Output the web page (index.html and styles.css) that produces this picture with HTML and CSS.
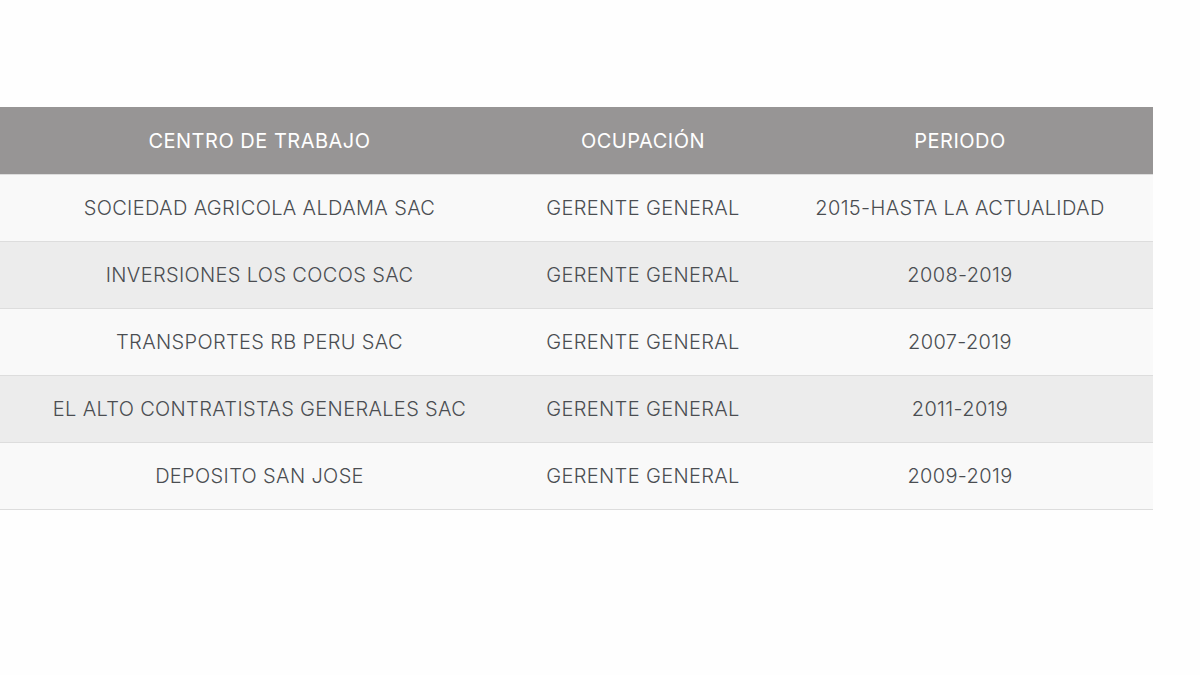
FILE: index.html
```html
<!DOCTYPE html>
<html lang="es">
<head>
<meta charset="utf-8">
<title>Experiencia</title>
<link rel="stylesheet" href="styles.css">
</head>
<body>
<main class="page">
  <table class="work-table">
    <thead>
      <tr>
        <th class="col-center">CENTRO DE TRABAJO</th>
        <th class="col-job">OCUPACIÓN</th>
        <th class="col-period">PERIODO</th>
      </tr>
    </thead>
    <tbody>
      <tr><td>SOCIEDAD AGRICOLA ALDAMA SAC</td><td>GERENTE GENERAL</td><td>2015-HASTA LA ACTUALIDAD</td></tr>
      <tr><td>INVERSIONES LOS COCOS SAC</td><td>GERENTE GENERAL</td><td>2008-2019</td></tr>
      <tr><td>TRANSPORTES RB PERU SAC</td><td>GERENTE GENERAL</td><td>2007-2019</td></tr>
      <tr><td>EL ALTO CONTRATISTAS GENERALES SAC</td><td>GERENTE GENERAL</td><td>2011-2019</td></tr>
      <tr><td>DEPOSITO SAN JOSE</td><td>GERENTE GENERAL</td><td>2009-2019</td></tr>
    </tbody>
  </table>
</main>
</body>
</html>
```
FILE: styles.css
```css
html, body {
  margin: 0;
  padding: 0;
  background: #fefefe;
}
.page {
  padding-top: 107px;
  width: 1153px;
}
.work-table {
  width: 100%;
  border-collapse: collapse;
  table-layout: fixed;
  font-family: Inter, "Liberation Sans", sans-serif;
  font-weight: 300;
  font-size: 20px;
  letter-spacing: 0.35px;
}
.col-center { width: 519px; }
.col-job { width: 248px; }
.col-period { width: 386px; }
.work-table th {
  background: #979595;
  color: #ffffff;
  font-weight: 400;
  letter-spacing: 0.5px;
  height: 67px;
  padding: 0;
  text-align: center;
  vertical-align: middle;
}
.work-table td {
  height: 66px;
  padding: 0;
  text-align: center;
  vertical-align: middle;
  color: #4a4d51;
  border-bottom: 1px solid #dddddd;
}
.work-table tbody tr:nth-child(odd) td { background: #f9f9f9; }
.work-table tbody tr:nth-child(even) td { background: #ececec; }
.work-table tbody tr:first-child td { border-top: 1px solid #dddddd; }
```
